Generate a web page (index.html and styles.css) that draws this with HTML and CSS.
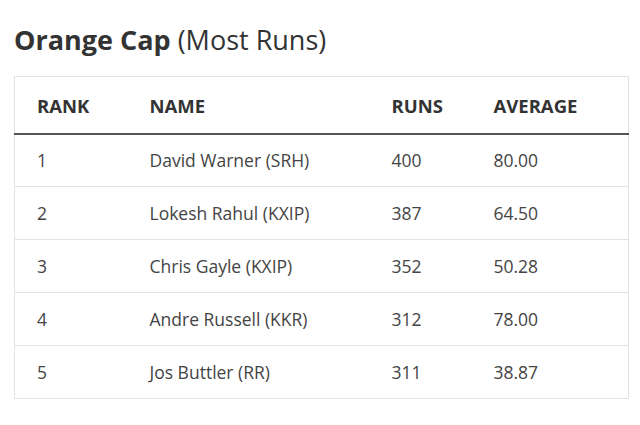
FILE: index.html
```html
<!DOCTYPE html>
<html>
<head>
<meta charset="utf-8">
<link rel="stylesheet" href="styles.css">
</head>
<body>
<div class="wrap">
  <h2 class="title"><strong>Orange Cap</strong> (Most Runs)</h2>
  <table class="stats">
    <thead>
      <tr><th class="c-rank">RANK</th><th class="c-name">NAME</th><th class="c-runs">RUNS</th><th class="c-avg">AVERAGE</th></tr>
    </thead>
    <tbody>
      <tr><td>1</td><td>David Warner (SRH)</td><td>400</td><td>80.00</td></tr>
      <tr><td>2</td><td>Lokesh Rahul (KXIP)</td><td>387</td><td>64.50</td></tr>
      <tr><td>3</td><td>Chris Gayle (KXIP)</td><td>352</td><td>50.28</td></tr>
      <tr><td>4</td><td>Andre Russell (KKR)</td><td>312</td><td>78.00</td></tr>
      <tr><td>5</td><td>Jos Buttler (RR)</td><td>311</td><td>38.87</td></tr>
    </tbody>
  </table>
</div>
</body>
</html>
```
FILE: styles.css
```css
html, body { margin: 0; padding: 0; background: #fff; }
body { font-family: "Open Sans", "Liberation Sans", sans-serif; color: #333; }
.wrap { padding: 23px 12px 0 14px; }
.title {
  margin: 0 0 19px 0;
  font-size: 27px;
  line-height: 34px;
  font-weight: 400;
  color: #333;
}
.title strong { font-weight: 700; }
.stats {
  width: 615px;
  border-collapse: collapse;
  border: 1px solid #e2e2e2;
  table-layout: fixed;
}
.stats th, .stats td { box-sizing: border-box; }
.stats th {
  text-align: left;
  font-size: 18.5px;
  font-weight: 700;
  color: #333;
  height: 57px;
  padding: 2px 0 0 22px;
  border-bottom: 2px solid #555;
}
.stats td {
  font-size: 17.5px;
  color: #444;
  height: 53px;
  padding: 0 0 0 22px;
  border-top: 1px solid #e2e2e2;
}
.stats tbody tr:first-child td { border-top: none; }
.c-rank { width: 113px; }
.c-name { width: 242px; }
.c-runs { width: 102px; }
.c-avg { width: auto; }
```
